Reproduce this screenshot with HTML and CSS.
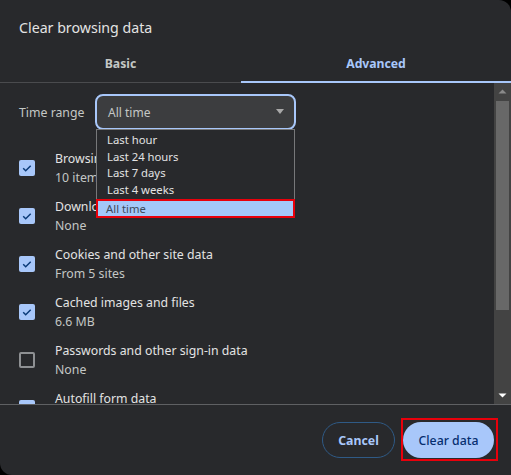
FILE: index.html
```html
<!DOCTYPE html>
<html>
<head>
<meta charset="utf-8">
<link rel="stylesheet" href="styles.css">
</head>
<body>
<div class="dialog">
  <div class="title">Clear browsing data</div>
  <div class="tabs">
    <div class="tab">Basic</div>
    <div class="tab active">Advanced</div>
  </div>
  <div class="body">
    <div class="content">
      <div class="range-row">
        <span class="range-label">Time range</span>
        <div class="select-wrap">
          <div class="select">
            <span>All time</span>
            <svg class="caret" width="8" height="5" viewBox="0 0 8 5"><path d="M0 0h8L4 5z" fill="#a9a9a9"/></svg>
          </div>
          <ul class="menu">
            <li>Last hour</li>
            <li>Last 24 hours</li>
            <li>Last 7 days</li>
            <li>Last 4 weeks</li>
            <li class="sel">All time</li>
          </ul>
        </div>
      </div>
      <div class="items">
        <div class="item">
          <span class="cb on"><svg width="16" height="16" viewBox="0 0 16 16"><path d="M4.2 8.3l2.5 2.4 5-5" fill="none" stroke="#0a3a78" stroke-width="1.5"/></svg></span>
          <div class="txt"><div class="t">Browsing history</div><div class="s">10 items</div></div>
        </div>
        <div class="item">
          <span class="cb on"><svg width="16" height="16" viewBox="0 0 16 16"><path d="M4.2 8.3l2.5 2.4 5-5" fill="none" stroke="#0a3a78" stroke-width="1.5"/></svg></span>
          <div class="txt"><div class="t">Download history</div><div class="s">None</div></div>
        </div>
        <div class="item">
          <span class="cb on"><svg width="16" height="16" viewBox="0 0 16 16"><path d="M4.2 8.3l2.5 2.4 5-5" fill="none" stroke="#0a3a78" stroke-width="1.5"/></svg></span>
          <div class="txt"><div class="t">Cookies and other site data</div><div class="s">From 5 sites</div></div>
        </div>
        <div class="item">
          <span class="cb on"><svg width="16" height="16" viewBox="0 0 16 16"><path d="M4.2 8.3l2.5 2.4 5-5" fill="none" stroke="#0a3a78" stroke-width="1.5"/></svg></span>
          <div class="txt"><div class="t">Cached images and files</div><div class="s">6.6 MB</div></div>
        </div>
        <div class="item">
          <span class="cb"></span>
          <div class="txt"><div class="t">Passwords and other sign-in data</div><div class="s">None</div></div>
        </div>
        <div class="item">
          <span class="cb on"><svg width="16" height="16" viewBox="0 0 16 16"><path d="M4.2 8.3l2.5 2.4 5-5" fill="none" stroke="#0a3a78" stroke-width="1.5"/></svg></span>
          <div class="txt"><div class="t">Autofill form data</div><div class="s">None</div></div>
        </div>
      </div>
    </div>
    <div class="scrollbar">
      <svg class="arrow" width="17" height="17" viewBox="0 0 17 17"><path d="M4.5 10.5h8L8.5 6.5z" fill="#8a8a8a"/></svg>
      <div class="track"><div class="thumb"></div></div>
      <svg class="arrow" width="17" height="17" viewBox="0 0 17 17"><path d="M4.5 6.5h8L8.5 10.5z" fill="#ffffff"/></svg>
    </div>
  </div>
  <div class="footer">
    <button class="btn cancel">Cancel</button>
    <span class="hl"><button class="btn primary">Clear data</button></span>
  </div>
</div>
</body>
</html>
```
FILE: styles.css
```css
* { box-sizing: border-box; }
html, body { margin: 0; padding: 0; background: #000; }
body { font-family: "Noto Sans", "Open Sans", sans-serif; color: #e3e3e3; }
.dialog {
  width: 511px; height: 475px;
  background: #28292c;
  border-top-right-radius: 12px;
  border-bottom-left-radius: 12px;
  overflow: hidden;
  display: flex; flex-direction: column;
}
.title {
  font-size: 14.2px; line-height: 20px;
  padding: 18px 19px 7px;
  color: #e3e3e3;
}
.tabs {
  display: grid; grid-template-columns: 241px 1fr;
  height: 38px;
  border-bottom: 1px solid #4a4b4e;
}
.tab {
  display: flex; align-items: center; justify-content: center;
  font-size: 12.2px; font-weight: 700; color: #c4c7c5;
  padding-bottom: 1px;
}
.tab.active { color: #a8c7fa; border-bottom: 2px solid #a8c7fa; margin-bottom: -1px; padding-bottom: 0; }
.body { display: flex; height: 322px; border-bottom: 1px solid #5f6063; }
.content { flex: 1; overflow: hidden; }
.range-row { display: flex; align-items: center; padding: 11px 0 0 19px; }
.range-label { font-size: 12.3px; color: #c4c7c5; width: 76px; }
.select-wrap { position: relative; }
.select {
  width: 201px; height: 36px;
  border: 2px solid #a8c7fa; border-radius: 8px;
  background: #3c3d3f;
  display: flex; align-items: center; justify-content: space-between;
  padding: 1px 10px 0 11px;
  font-size: 12px; color: #c4c7c5;
}
.caret { margin-top: -2px; }
.menu {
  position: absolute; left: 1px; top: 35px;
  width: 199px; margin: 0; padding: 2px 0 0;
  list-style: none;
  background: #28292c;
  border: 1px solid #77787a;
  font-size: 11.3px; line-height: 16.7px;
  color: #e3e3e3;
  z-index: 2;
}
.menu li { padding: 0 0 0 10px; height: 16.7px; }
.menu li.sel {
  background: #a3c8f9; color: #3f4a5a;
  border: 2px solid #e8000b; padding-left: 8px;
  height: 19px; line-height: 15px;
  margin: 0 -1px -1px;
}
.items { padding-top: 14px; }
.item { display: flex; align-items: center; height: 48px; padding-left: 19px; }
.cb {
  width: 16px; height: 16px; border-radius: 2px;
  border: 2px solid #8e9093;
  flex: none; margin-right: 20px;
}
.cb.on { background: #a8c7fa; border: none; }
.cb svg { display: block; }
.txt { font-size: 12.3px; line-height: 19px; }
.t { color: #e3e3e3; }
.s { color: #c4c7c5; }
.scrollbar {
  width: 17px; background: #434343;
  display: flex; flex-direction: column;
}
.arrow { display: block; flex: none; }
.track { flex: 1; padding: 1px 2px; }
.thumb { height: 209px; background: #686868; }
.footer {
  flex: 1;
  display: flex; justify-content: flex-end; align-items: flex-start;
  gap: 6px;
  padding: 13px 13px 0 0;
}
.btn {
  height: 36px; border-radius: 18px;
  font-family: inherit; font-size: 12.3px; font-weight: 700;
  padding: 0; cursor: pointer; display: block;
}
.cancel { width: 73px; margin-top: 4px; background: transparent; border: 1px solid #2f5a86; color: #a8c7fa; }
.hl { display: block; border: 2px solid #e8000b; padding: 2px 2px 1px 0; }
.primary {
  width: 91px; background: #a8c7fa; border: none; color: #062e6f;
  font-weight: 500;
}
```
